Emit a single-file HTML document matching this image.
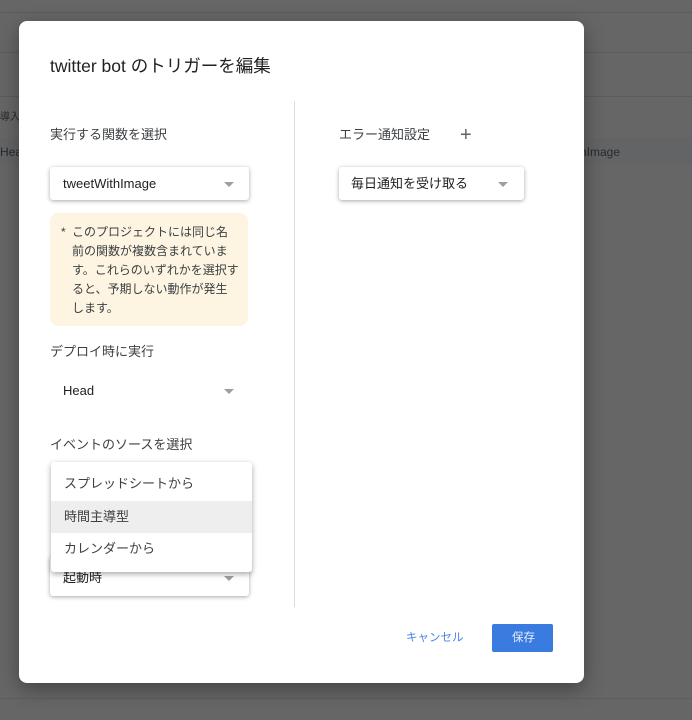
<!DOCTYPE html>
<html><head><meta charset="utf-8"><style>
*{margin:0;padding:0;box-sizing:border-box}
body{width:692px;height:720px;background:#666;position:relative;overflow:hidden;font-family:"Liberation Sans","Noto Sans CJK JP",sans-serif;color:#3c4043}
.a{position:absolute}
.line{position:absolute;left:0;width:692px;height:1px;background:#5c5c5c}
.dlg{left:19px;top:21px;width:565px;height:662px;background:#fff;border-radius:8px;box-shadow:0 6px 20px rgba(0,0,0,.35)}
.t{position:absolute;font-size:13px;line-height:16px;white-space:nowrap}
.sel{position:absolute;background:#fff;border-radius:3px;box-shadow:0 1px 4px rgba(0,0,0,.35)}
.arr{position:absolute;width:0;height:0;border-left:5px solid transparent;border-right:5px solid transparent;border-top:5px solid #9aa0a6}
</style></head><body>
<div class="line" style="top:12px"></div>
<div class="line" style="top:52px"></div>
<div class="line" style="top:96px"></div>
<div class="a" style="left:0;top:138px;width:692px;height:27px;background:#636466"></div>
<div class="t" style="left:0;top:144px;color:#2a2a2a;font-size:12px">Hea</div>
<div class="t" style="left:580px;top:144px;color:#2a2a2a;font-size:12px">hImage</div>
<div class="t" style="left:0;top:110px;color:#2a2a2a;font-size:10px">導入</div>
<div class="line" style="top:698px;background:#5e5e5e"></div>

<div class="a dlg"></div>
<div class="t" style="left:50px;top:55px;font-size:17.5px;line-height:22px;color:#202124">twitter bot のトリガーを編集</div>
<div class="a" style="left:294px;top:101px;width:1px;height:506px;background:#dadce0"></div>

<div class="t" style="left:50px;top:127px">実行する関数を選択</div>
<div class="sel" style="left:50px;top:167px;width:199px;height:33px"></div>
<div class="t" style="left:63px;top:176px;color:#202124">tweetWithImage</div>
<div class="arr" style="left:224px;top:182px"></div>

<div class="a" style="left:50px;top:213px;width:198px;height:113px;background:#fdf5e1;border-radius:8px"></div>
<div class="t" style="left:61px;top:224px;font-size:12px">*</div>
<div class="t" style="left:72px;top:223px;font-size:12px;line-height:19px">このプロジェクトには同じ名<br>前の関数が複数含まれていま<br>す。これらのいずれかを選択す<br>ると、予期しない動作が発生<br>します。</div>

<div class="t" style="left:50px;top:344px">デプロイ時に実行</div>
<div class="t" style="left:63px;top:383px;color:#202124">Head</div>
<div class="arr" style="left:224px;top:389px"></div>

<div class="t" style="left:50px;top:437px">イベントのソースを選択</div>

<div class="sel" style="left:50px;top:556px;width:199px;height:40px"></div>
<div class="t" style="left:63px;top:570px;color:#202124">起動時</div>
<div class="arr" style="left:224px;top:576px"></div>

<div class="sel" style="left:51px;top:462px;width:201px;height:110px;box-shadow:0 2px 6px rgba(0,0,0,.35)"></div>
<div class="a" style="left:51px;top:501px;width:201px;height:32px;background:#eee"></div>
<div class="t" style="left:64px;top:476px">スプレッドシートから</div>
<div class="t" style="left:64px;top:509px">時間主導型</div>
<div class="t" style="left:64px;top:541px">カレンダーから</div>

<div class="t" style="left:339px;top:127px">エラー通知設定</div>
<div class="t" style="left:460px;top:124px;font-size:20px;line-height:22px;color:#5f6368">+</div>
<div class="sel" style="left:339px;top:167px;width:185px;height:33px"></div>
<div class="t" style="left:351px;top:176px;color:#202124">毎日通知を受け取る</div>
<div class="arr" style="left:498px;top:182px"></div>

<div class="t" style="left:406px;top:630px;color:#4a86e8;font-size:11.5px">キャンセル</div>
<div class="a" style="left:492px;top:624px;width:61px;height:28px;background:#3a7be0;border-radius:2px"></div>
<div class="t" style="left:512px;top:630px;color:#e8f0fe;font-size:11.5px">保存</div>
</body></html>
